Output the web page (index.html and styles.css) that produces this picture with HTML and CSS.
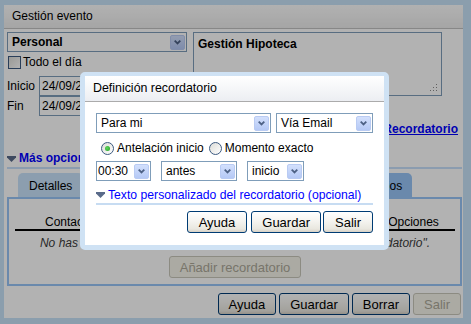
FILE: index.html
```html
<!DOCTYPE html>
<html lang="es">
<head>
  <meta charset="UTF-8">
  <title>Gestión evento</title>
  <link rel="stylesheet" href="styles.css">
</head>
<body>

<div class="ventana">
  <div class="titulo">Gestión evento</div>

  <div class="cuerpo">
    <div class="fila-superior">
      <div class="col-izq">
        <div class="combo negrita">
          <span class="valor">Personal</span>
          <span class="flecha"><svg width="7" height="5" viewBox="0 0 7 5"><path d="M0.7 0.7L3.5 3.5L6.3 0.7"/></svg></span>
        </div>
        <label class="check"><span class="caja"></span>Todo el día</label>
        <div class="fecha fecha-inicio"><span class="etiqueta">Inicio</span><span class="campo">24/09/2009</span></div>
        <div class="fecha"><span class="etiqueta">Fin</span><span class="campo">24/09/2009</span></div>
      </div>
      <div class="descripcion">
        Gestión Hipoteca
        <svg class="grip" width="10" height="10" viewBox="0 0 10 10">
          <rect x="8" y="2" width="1" height="1"/>
          <rect x="5" y="5" width="1" height="1"/><rect x="8" y="5" width="1" height="1"/>
          <rect x="2" y="8" width="1" height="1"/><rect x="5" y="8" width="1" height="1"/><rect x="8" y="8" width="1" height="1"/>
        </svg>
      </div>
    </div>

    <div class="enlace-derecha"><a href="#">Añadir Recordatorio</a></div>

    <div class="mas-opciones">
      <a href="#"><svg class="triangulo" width="9" height="6" viewBox="0 0 9 6"><polygon points="0,0 9,0 9,1.5 4.5,6 0,1.5"/></svg>Más opciones</a>
    </div>

    <div class="pestanas">
      <span class="pestana">Detalles</span>
      <span class="pestana">Participantes</span>
      <span class="pestana">Repetición periódica</span>
      <span class="pestana activa">Recordatorios</span>
    </div>
    <div class="panel">
      <div class="tabla-cab">
        <span>Contacto</span>
        <span>Antelación</span>
        <span>Opciones</span>
      </div>
      <div class="vacio">No has definido ningún recordatorio. Pulsa el botón "Añadir recordatorio".</div>
      <div class="centrado"><button class="boton" disabled>Añadir recordatorio</button></div>
    </div>

    <div class="botonera">
      <button class="boton">Ayuda</button>
      <button class="boton">Guardar</button>
      <button class="boton">Borrar</button>
      <button class="boton" disabled>Salir</button>
    </div>
  </div>
</div>

<!-- capa oscura del dialogo -->
<div class="capa"></div>

<div class="dialogo">
  <div class="dialogo-titulo">Definición recordatorio</div>
  <div class="dialogo-cuerpo">
    <div class="fila">
      <div class="combo combo-para">
        <span class="valor">Para mi</span>
        <span class="flecha"><svg width="7" height="5" viewBox="0 0 7 5"><path d="M0.7 0.7L3.5 3.5L6.3 0.7"/></svg></span>
      </div>
      <div class="combo combo-via">
        <span class="valor">Vía Email</span>
        <span class="flecha"><svg width="7" height="5" viewBox="0 0 7 5"><path d="M0.7 0.7L3.5 3.5L6.3 0.7"/></svg></span>
      </div>
    </div>

    <div class="fila radios">
      <label class="radio"><span class="circulo marcado"></span>Antelación inicio</label>
      <label class="radio"><span class="circulo"></span>Momento exacto</label>
    </div>

    <div class="fila fila-tiempo">
      <div class="combo combo-hora">
        <span class="valor">00:30</span>
        <span class="flecha"><svg width="7" height="5" viewBox="0 0 7 5"><path d="M0.7 0.7L3.5 3.5L6.3 0.7"/></svg></span>
      </div>
      <div class="combo combo-antes">
        <span class="valor">antes</span>
        <span class="flecha"><svg width="7" height="5" viewBox="0 0 7 5"><path d="M0.7 0.7L3.5 3.5L6.3 0.7"/></svg></span>
      </div>
      <div class="combo combo-inicio">
        <span class="valor">inicio</span>
        <span class="flecha"><svg width="7" height="5" viewBox="0 0 7 5"><path d="M0.7 0.7L3.5 3.5L6.3 0.7"/></svg></span>
      </div>
    </div>

    <div class="texto-personalizado">
      <a href="#"><svg class="triangulo" width="9" height="6" viewBox="0 0 9 6"><polygon points="0,0 9,0 9,1.5 4.5,6 0,1.5"/></svg>Texto personalizado del recordatorio (opcional)</a>
    </div>

    <div class="botones-dialogo">
      <button class="boton boton-ayuda">Ayuda</button>
      <button class="boton">Guardar</button>
      <button class="boton boton-salir">Salir</button>
    </div>
  </div>
</div>

</body>
</html>
```

FILE: styles.css
```css
body {
  margin: 0;
  height: 324px;
  overflow: hidden;
  background-color: #c8e2f8;
  font-family: "Liberation Sans", Arial, sans-serif;
  font-size: 12px;
  color: #000;
}

a {
  color: #0000ff;
}

.ventana {
  margin: 5px 0 0 4px;
  width: 459px;
  height: 313px;
  background-color: #fff;
  display: flex;
  flex-direction: column;
}

.titulo {
  height: 23px;
  line-height: 23px;
  padding-left: 8px;
  border-bottom: 1px solid #c2c2c2;
  background: linear-gradient(#fefefe, #ededed);
}

.cuerpo {
  flex: 1;
  display: flex;
  flex-direction: column;
  padding: 3px 0 0 3px;
}

.fila-superior {
  display: flex;
  gap: 6px;
}

.col-izq {
  width: 180px;
  display: flex;
  flex-direction: column;
}

/* combos estilo XP */
.combo {
  display: flex;
  align-items: center;
  height: 20px;
  box-sizing: border-box;
  border: 1px solid #7f9db9;
  background-color: #fff;
}

.combo .valor {
  flex: 1;
  padding-left: 4px;
  white-space: nowrap;
  overflow: hidden;
}

.negrita {
  font-weight: bold;
}

.flecha {
  width: 15px;
  height: 15px;
  margin-right: 1px;
  box-sizing: border-box;
  border: 1px solid #b9cbf3;
  border-radius: 2px;
  background: linear-gradient(#d3e0fc, #b5c9f6);
  display: flex;
  align-items: center;
  justify-content: center;
}

.flecha path {
  fill: none;
  stroke: #4d6185;
  stroke-width: 1.8;
}

.check {
  display: flex;
  align-items: center;
  height: 20px;
}

.caja {
  width: 13px;
  height: 13px;
  box-sizing: border-box;
  margin: 0 2px 0 1px;
  border: 1px solid #3c5a80;
  background: linear-gradient(135deg, #dcdcd7, #fff);
}

.fecha {
  display: flex;
  align-items: center;
  height: 20px;
}

.fecha-inicio {
  margin-top: 4px;
}

.etiqueta {
  width: 32px;
}

.campo {
  width: 120px;
  height: 20px;
  line-height: 18px;
  box-sizing: border-box;
  padding-left: 2px;
  border: 1px solid #7f9db9;
}

.descripcion {
  position: relative;
  width: 249px;
  height: 64px;
  box-sizing: border-box;
  padding: 4px;
  border: 1px solid #7f9db9;
  font-weight: bold;
}

.grip {
  position: absolute;
  right: 3px;
  bottom: 3px;
  fill: #8c8c8c;
}

.enlace-derecha {
  display: flex;
  justify-content: flex-end;
  margin-top: 6px;
  padding-right: 5px;
  line-height: 15px;
  font-weight: bold;
}

.mas-opciones {
  margin: 14px 1px 0 0;
  padding-bottom: 1px;
  line-height: 15px;
  border-bottom: 2px solid #c7e0fb;
  font-weight: bold;
}

.mas-opciones a,
.texto-personalizado a {
  text-decoration: none;
  display: flex;
  align-items: center;
}

.triangulo {
  margin-right: 3px;
  fill: #5a6b8a;
}

.pestanas {
  display: flex;
  gap: 3px;
  margin-top: 4px;
  padding-left: 11px;
}

.pestana {
  height: 24px;
  line-height: 26px;
  padding: 0 11px;
  border-radius: 5px 5px 0 0;
  background-color: #c9e3fb;
  white-space: nowrap;
}

.pestana.activa {
  padding: 0 10px 0 13px;
  background-color: #98c5f7;
}

.panel {
  height: 89px;
  box-sizing: border-box;
  margin-right: 1px;
  padding: 0 5px 0 6px;
  border: 2px solid #98c5f7;
  display: flex;
  flex-direction: column;
}

.tabla-cab {
  display: grid;
  grid-template-columns: 108px 1fr 83px;
  padding-top: 16px;
  line-height: 14px;
  text-align: center;
  border-bottom: 2px solid #000;
}

.vacio {
  margin-top: 5px;
  line-height: 14px;
  text-align: center;
  font-style: italic;
  color: #3a3a3a;
  white-space: nowrap;
}

.centrado {
  display: flex;
  justify-content: center;
  margin-top: 6px;
}

/* botones estilo XP */
.boton {
  height: 22px;
  padding: 0 10px;
  font-family: "Liberation Sans", Arial, sans-serif;
  font-size: 13px;
  color: #000;
  border: 1px solid #003c74;
  border-radius: 3px;
  background: linear-gradient(#ffffff, #f5f4f0 45%, #e9e7df 85%, #d6d0c5);
  cursor: pointer;
}

.boton:disabled {
  color: #aca899;
  border-color: #c9c7ba;
  background: #f5f4ea;
  cursor: default;
}

.botonera {
  display: flex;
  justify-content: flex-end;
  gap: 3px;
  margin-top: 7px;
  padding-right: 2px;
}

.capa {
  position: fixed;
  top: 0;
  left: 0;
  width: 100%;
  height: 100%;
  background-color: rgba(0, 0, 0, 0.3);
}

.dialogo {
  position: absolute;
  left: 80px;
  top: 72px;
  width: 309px;
  height: 178px;
  box-sizing: border-box;
  border: 5px solid #cfe2f4;
  border-top-width: 4px;
  border-radius: 5px;
  background-color: #fff;
}

.dialogo-titulo {
  height: 25px;
  line-height: 25px;
  padding-left: 8px;
  border-bottom: 1px solid #ababab;
  background: linear-gradient(#ffffff, #eceef2);
  font-size: 12.4px;
}

.dialogo-cuerpo {
  padding: 11px 11px 0 11px;
  display: flex;
  flex-direction: column;
}

.fila {
  display: flex;
  gap: 5px;
}

.combo-para {
  width: 175px;
}

.combo-via {
  width: 97px;
}

.radios {
  margin-top: 7px;
  height: 16px;
  gap: 0;
}

.radio {
  display: flex;
  align-items: center;
  margin-left: 5px;
}

.circulo {
  width: 13px;
  height: 13px;
  box-sizing: border-box;
  margin-right: 3px;
  border: 1px solid #3c5a80;
  border-radius: 50%;
  background: linear-gradient(135deg, #dcdcd7, #fff);
  display: flex;
  align-items: center;
  justify-content: center;
}

.circulo.marcado::after {
  content: "";
  width: 5px;
  height: 5px;
  border-radius: 50%;
  background: radial-gradient(circle at 40% 40%, #5ed45e, #21a121);
}

.fila-tiempo {
  margin-top: 5px;
  gap: 10px;
}

.combo-hora {
  width: 55px;
}

.combo-hora .valor {
  padding-left: 1px;
}

.combo-antes {
  width: 76px;
}

.combo-inicio {
  width: 57px;
}

.texto-personalizado {
  margin-top: 6px;
  line-height: 16px;
  border-bottom: 2px solid #c7dcf2;
  font-size: 12.2px;
}

.botones-dialogo {
  display: flex;
  justify-content: flex-end;
  gap: 3px;
  margin-top: 6px;
}

.botones-dialogo .boton-ayuda {
  padding: 0 11px;
  margin-right: 1px;
}

.botones-dialogo .boton-salir {
  padding: 0 11px;
  margin-left: -1px;
}
```
